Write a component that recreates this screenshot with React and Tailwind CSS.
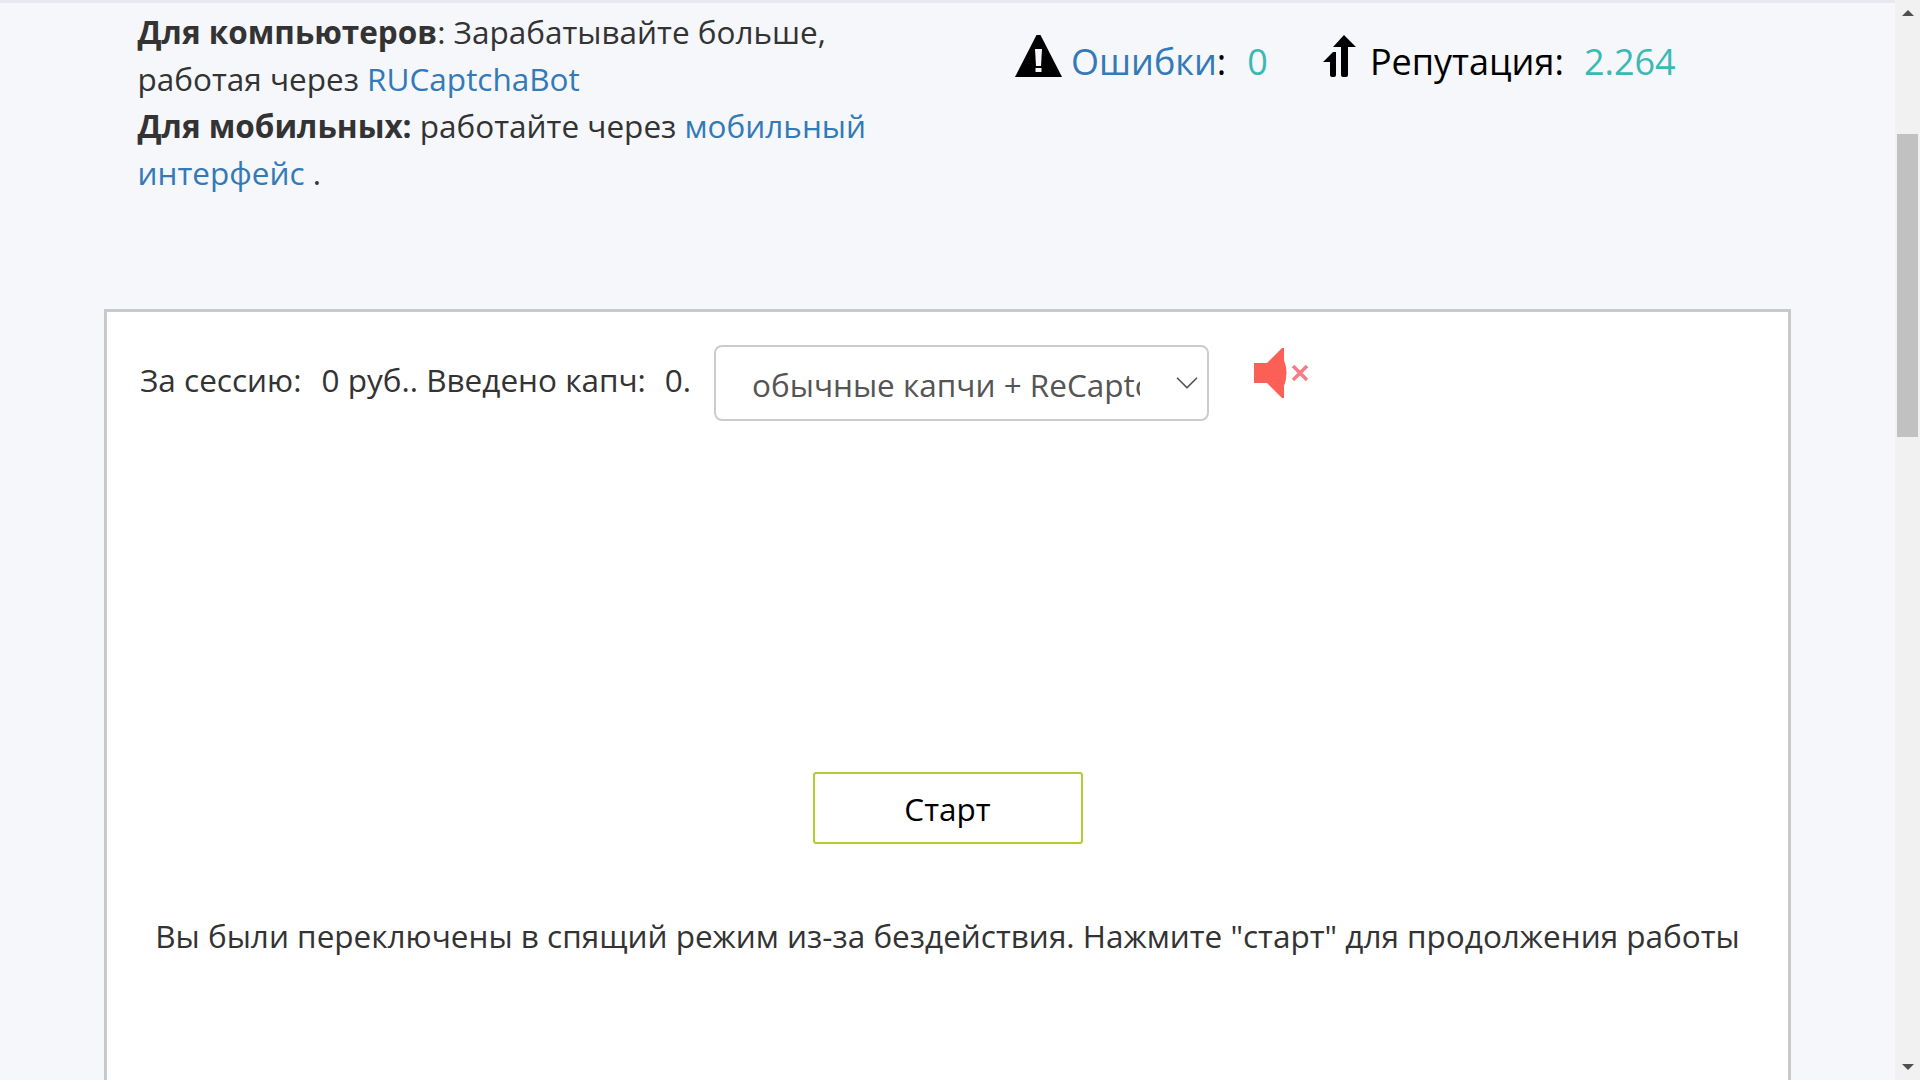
import { ChevronDown } from "lucide-react";

function WarningIcon() {
  return (
    <svg width="47" height="42" viewBox="0 0 47 42" className="mb-[11px] block">
      <path d="M21.5 0 H25.5 L47 42 H0 Z" fill="#000" />
      <path d="M20 14 H27 L26 31 H21 Z" fill="#f5f7fb" />
      <rect x="20.5" y="33" width="6" height="4" fill="#f5f7fb" />
    </svg>
  );
}

function ReputationIcon() {
  return (
    <svg width="33" height="42" viewBox="0 0 33 42" className="mb-[11px] ml-[55px] block">
      <path d="M21 0 L33 12 H25 V40 Q25 42 23 42 H20 Q18 42 18 40 V12 H10 Z" fill="#000" />
      <path d="M0 27 L10 17 H13 V40 Q13 42 11 42 H9 Q7 42 7 40 V27 Z" fill="#000" />
    </svg>
  );
}

function MutedIcon() {
  return (
    <svg width="56" height="52" viewBox="0 0 56 52" className="block">
      <path d="M0 16 H13 L28 1 H30 V51 H28 L13 36 H0 Z" fill="#fb5f55" />
      <path d="M30 13 Q35 26 30 39 Z" fill="#fb5f55" />
      <path d="M39 19 L53 33 M53 19 L39 33" stroke="#f87c84" strokeWidth="3.5" fill="none" />
    </svg>
  );
}

export default function App() {
  return (
    <div className="flex h-[1080px] overflow-hidden bg-[#f5f7fb] font-['Open_Sans',sans-serif] text-[31.5px] leading-[47px] text-[#333]">
      <main className="flex min-w-0 flex-1 flex-col border-t-[3px] border-[#e8e9ee]">
        <div className="flex h-[306px] shrink-0">
          <div className="ml-[137.5px] mt-[5px] w-[760px]">
            <div>
              <b className="font-bold">Для компьютеров</b>: Зарабатывайте больше, работая через{" "}
              <a className="text-[#337ab7]">RUCaptchaBot</a>
            </div>
            <div>
              <b className="font-bold">Для мобильных:</b> работайте через{" "}
              <a className="text-[#337ab7]">мобильный интерфейс</a> .
            </div>
          </div>
          <div className="ml-[117.5px] mt-[35px] flex h-[47px] items-center text-[36px]">
            <WarningIcon />
            <a className="ml-[9px] text-[#337ab7]">Ошибки</a>
            <span className="text-black">:</span>
            <span className="ml-[21px] text-[#3bb9b5]">0</span>
            <ReputationIcon />
            <span className="ml-[14px] text-black">Репутация:</span>
            <span className="ml-[20px] text-[#3bb9b5]">2.264</span>
          </div>
        </div>

        <section className="mx-[104px] flex-1 border-[3px] border-b-0 border-[#c9c9c9] bg-white">
          <div className="flex">
            <div className="ml-[33px] mt-[44px] flex w-[574px] shrink-0 whitespace-pre">
              <span>За сессию:</span>
              <span className="ml-[20px]">0 руб.. Введено капч:</span>
              <span className="ml-[19px]">0.</span>
            </div>
            <div className="mt-[33px] flex h-[76px] w-[495px] items-center rounded-[8px] border-[2px] border-[#cccccc] pl-[36px] pr-[1px] text-[#555]">
              <span className="mt-[3px] w-[388px] overflow-hidden whitespace-nowrap">обычные капчи + ReCaptcha</span>
              <ChevronDown className="ml-auto text-[#555]" size={38} strokeWidth={1.1} />
            </div>
            <div className="ml-[45px] mt-[35px]">
              <MutedIcon />
            </div>
          </div>
          <div className="mt-[351px] flex justify-center">
            <button className="h-[72px] w-[270px] rounded-[3px] border-[2px] border-[#b5cb33] bg-white text-black">
              Старт
            </button>
          </div>
          <p className="mt-[68px] text-center">
            Вы были переключены в спящий режим из-за бездействия. Нажмите "старт" для продолжения работы
          </p>
        </section>
      </main>

      <aside className="flex w-[25px] shrink-0 flex-col items-center bg-[#f1f1f1] pt-[10px]">
        <div className="h-0 w-0 border-x-[6px] border-b-[6px] border-x-transparent border-b-[#505050]" />
        <div className="mt-[118px] h-[303px] w-[21px] bg-[#c1c1c1]" />
        <div className="mt-[627px] h-0 w-0 border-x-[6px] border-t-[6px] border-x-transparent border-t-[#505050]" />
      </aside>
    </div>
  );
}
